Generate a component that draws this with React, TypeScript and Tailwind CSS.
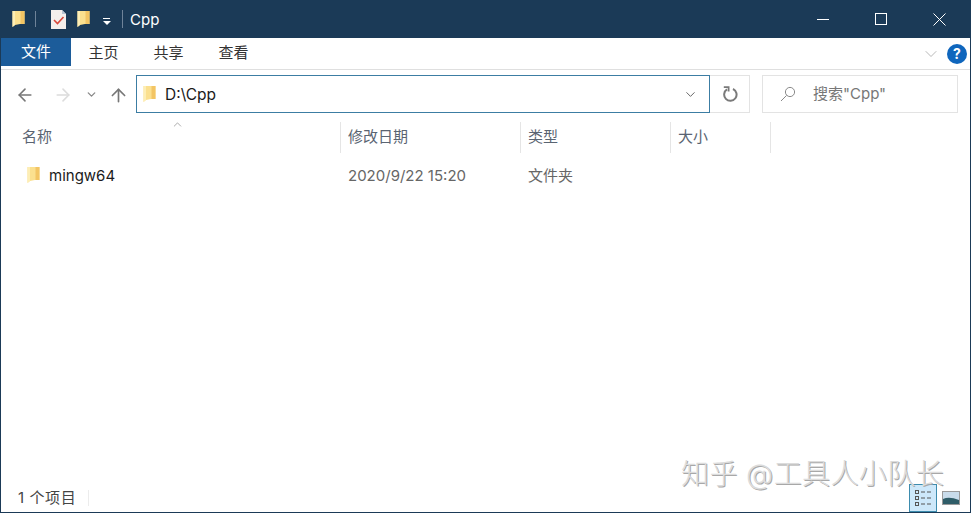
import { ChevronDown, ChevronUp, ArrowLeft, ArrowRight, ArrowUp } from "lucide-react";

const font = "font-['Inter','Noto_Sans_CJK_SC',sans-serif]";

function Folder({ className }: { className?: string }) {
  return (
    <svg viewBox="0 0 13 18" className={className}>
      <path d="M0.5 1 H12.5 V14 H8 L3 15 L0.5 17 Z" fill="#fbe08f" />
      <path d="M8.5 1 H12.5 V14 H8.5 Z" fill="#f3c564" />
      <path d="M0.5 1 H3 V15 L0.5 17 Z" fill="#fdeeb5" />
    </svg>
  );
}

function Tab({ label }: { label: string }) {
  return <div className="w-[65px] -mt-[1px] text-center text-[15px] text-[#333]">{label}</div>;
}

function Col({ label, w }: { label: string; w: string }) {
  return (
    <div className={`${w} h-[31px] flex items-center pl-[7px] border-r border-[#e5e5e5] text-[15px] text-[#5a6472]`}>
      {label}
    </div>
  );
}

export default function App() {
  return (
    <div className={`${font} relative w-[971px] h-[513px] flex flex-col bg-white border-x border-b border-[#1b3a57] overflow-hidden`}>
      {/* title bar */}
      <div className="h-[38px] shrink-0 bg-[#1b3a57] flex items-center text-white">
        <Folder className="ml-[11px] w-[13px] h-[18px]" />
        <div className="ml-[10px] w-px h-[16px] bg-[#6f8399]" />
        <svg viewBox="0 0 15 19" className="ml-[15px] w-[15px] h-[19px]">
          <path d="M0 0 H11 L15 4 V19 H0 Z" fill="#f4efec" />
          <path d="M11 0 L15 4 H11 Z" fill="#b9c4d2" />
          <path d="M3 10 L6.5 13.5 L12.5 7" fill="none" stroke="#d9483b" strokeWidth="1.6" />
        </svg>
        <Folder className="ml-[11px] w-[13px] h-[18px]" />
        <div className="ml-[12px] w-[9px] flex flex-col items-center gap-[2px] mt-[4px]">
          <div className="w-[7px] h-px bg-white" />
          <div className="w-0 h-0 border-x-[4px] border-x-transparent border-t-[4px] border-t-white" />
        </div>
        <div className="ml-[11px] w-px h-[18px] bg-[#6f8399]" />
        <div className="ml-[7px] text-[15px] leading-none">Cpp</div>
        <div className="ml-auto flex items-center">
          <div className="w-[12px] h-px bg-white mr-[46px]" />
          <div className="w-[12px] h-[12px] border border-white mr-[46px]" />
          <svg viewBox="0 0 13 13" className="w-[13px] h-[13px] mr-[24px]" fill="none" stroke="white" strokeWidth="1">
            <path d="M0.5 0.5 L12.5 12.5 M12.5 0.5 L0.5 12.5" />
          </svg>
        </div>
      </div>

      {/* ribbon tabs */}
      <div className="h-[32px] shrink-0 flex items-center border-b border-[#dfdfdf]">
        <div className="w-[70px] h-[28px] self-start bg-[#1c5c9a] text-white text-[15px] flex items-center justify-center">文件</div>
        <Tab label="主页" />
        <Tab label="共享" />
        <Tab label="查看" />
        <ChevronDown size={20} strokeWidth={1} className="ml-auto mr-[6px] text-[#a9a9a9]" />
        <div className="w-[20px] h-[20px] mr-[3px] rounded-full bg-[#0f66bd] text-white text-[14px] font-bold flex items-center justify-center">?</div>
      </div>

      {/* nav bar */}
      <div className="h-[44px] shrink-0 mt-[5px] flex">
        <ArrowLeft size={20} strokeWidth={1.9} className="ml-[14px] mt-[10px] text-[#777]" />
        <ArrowRight size={20} strokeWidth={1.9} className="ml-[18px] mt-[10px] text-[#dcdcdc]" />
        <ChevronDown size={13} strokeWidth={2.4} className="ml-[12px] mt-[13px] text-[#888]" />
        <ArrowUp size={21} strokeWidth={1.9} className="ml-[10px] mt-[10px] text-[#777]" />
        <div className="ml-[7px] w-[574px] h-[38px] border border-[#3c7da3] flex items-center text-[#1a1a1a]">
          <Folder className="ml-[6px] w-[13px] h-[18px]" />
          <span className="ml-[9px] text-[15.5px] mt-[1px]">D:\Cpp</span>
          <ChevronDown size={15} strokeWidth={1.3} className="ml-auto mr-[11px] text-[#444]" />
        </div>
        <div className="w-[40px] h-[38px] border border-l-0 border-[#e3e3e3] flex items-center justify-center">
          <svg viewBox="0 0 16 16" className="w-[16px] h-[16px]" fill="none" stroke="#7a7a7a" strokeWidth="2">
            <path d="M5 3.4 A6.2 6.2 0 1 0 11 3" />
            <path d="M1.8 1.2 H6.6 V5.6" strokeWidth="1.8" />
          </svg>
        </div>
        <div className="ml-[12px] w-[196px] h-[38px] border border-[#e3e3e3] flex items-center text-[#777] text-[15px]">
          <svg viewBox="0 0 16 16" className="ml-[17px] w-[16px] h-[16px]" fill="none" stroke="#8a8a8a" strokeWidth="1">
            <circle cx="10" cy="6" r="4.6" />
            <path d="M6.6 9.4 L1 15" />
          </svg>
          <span className="ml-[17px]">搜索"Cpp"</span>
        </div>
      </div>

      {/* file list */}
      <div className="mt-[3px] flex-1 min-h-0">
        <div className="relative flex">
          <ChevronUp size={13} strokeWidth={1} className="absolute left-[170px] -top-[4px] text-[#666]" />
          <div className="w-[14px]" />
          <Col label="名称" w="w-[326px]" />
          <Col label="修改日期" w="w-[180px]" />
          <Col label="类型" w="w-[150px]" />
          <Col label="大小" w="w-[100px]" />
        </div>
        <div className="mt-[8px] h-[30px] flex items-center text-[15px]">
          <Folder className="ml-[26px] w-[13px] h-[18px] -mt-[2px]" />
          <span className="ml-[9px] w-[299px] text-[#1a1a1a]">mingw64</span>
          <span className="w-[180px] text-[#666]">2020/9/22 15:20</span>
          <span className="text-[#666]">文件夹</span>
        </div>
      </div>

      {/* status bar */}
      <div className="h-[28px] shrink-0 flex items-center text-[15px] text-[#444]">
        <span className="ml-[17px] tracking-[0.6px] whitespace-pre">1 个项目</span>
        <div className="ml-[12px] w-px h-[16px] bg-[#ececec]" />
        <div className="ml-auto mr-[10px] flex items-center">
          <div className="w-[28px] h-[28px] bg-[#cde8fa] border border-[#3d8cae] flex items-center justify-center">
            <svg viewBox="0 0 18 18" className="w-[18px] h-[18px]" fill="none" stroke="#555" strokeWidth="1">
              <rect x="1.5" y="1.5" width="3" height="3" />
              <rect x="1.5" y="7.5" width="3" height="3" />
              <rect x="1.5" y="13.5" width="3" height="3" />
              <path d="M7 3 H11 M13 3 H17 M7 9 H11 M13 9 H17 M7 15 H11 M13 15 H17" />
            </svg>
          </div>
          <svg viewBox="0 0 18 14" className="ml-[5px] w-[18px] h-[14px]">
            <rect x="0.5" y="0.5" width="17" height="13" fill="#c9dceb" stroke="#9a9a9a" />
            <path d="M1 8 Q7 5 17 9 V13 H1 Z" fill="#2f5d68" />
          </svg>
        </div>
      </div>

      {/* watermark */}
      <div className="absolute left-[680px] top-[456px] text-[28px] font-light leading-[36px] tracking-[0.4px] whitespace-nowrap text-[#dcdcdc] [text-shadow:1px_1px_0_#a8a8a8] pointer-events-none">
        知乎 @工具人小队长
      </div>
    </div>
  );
}
